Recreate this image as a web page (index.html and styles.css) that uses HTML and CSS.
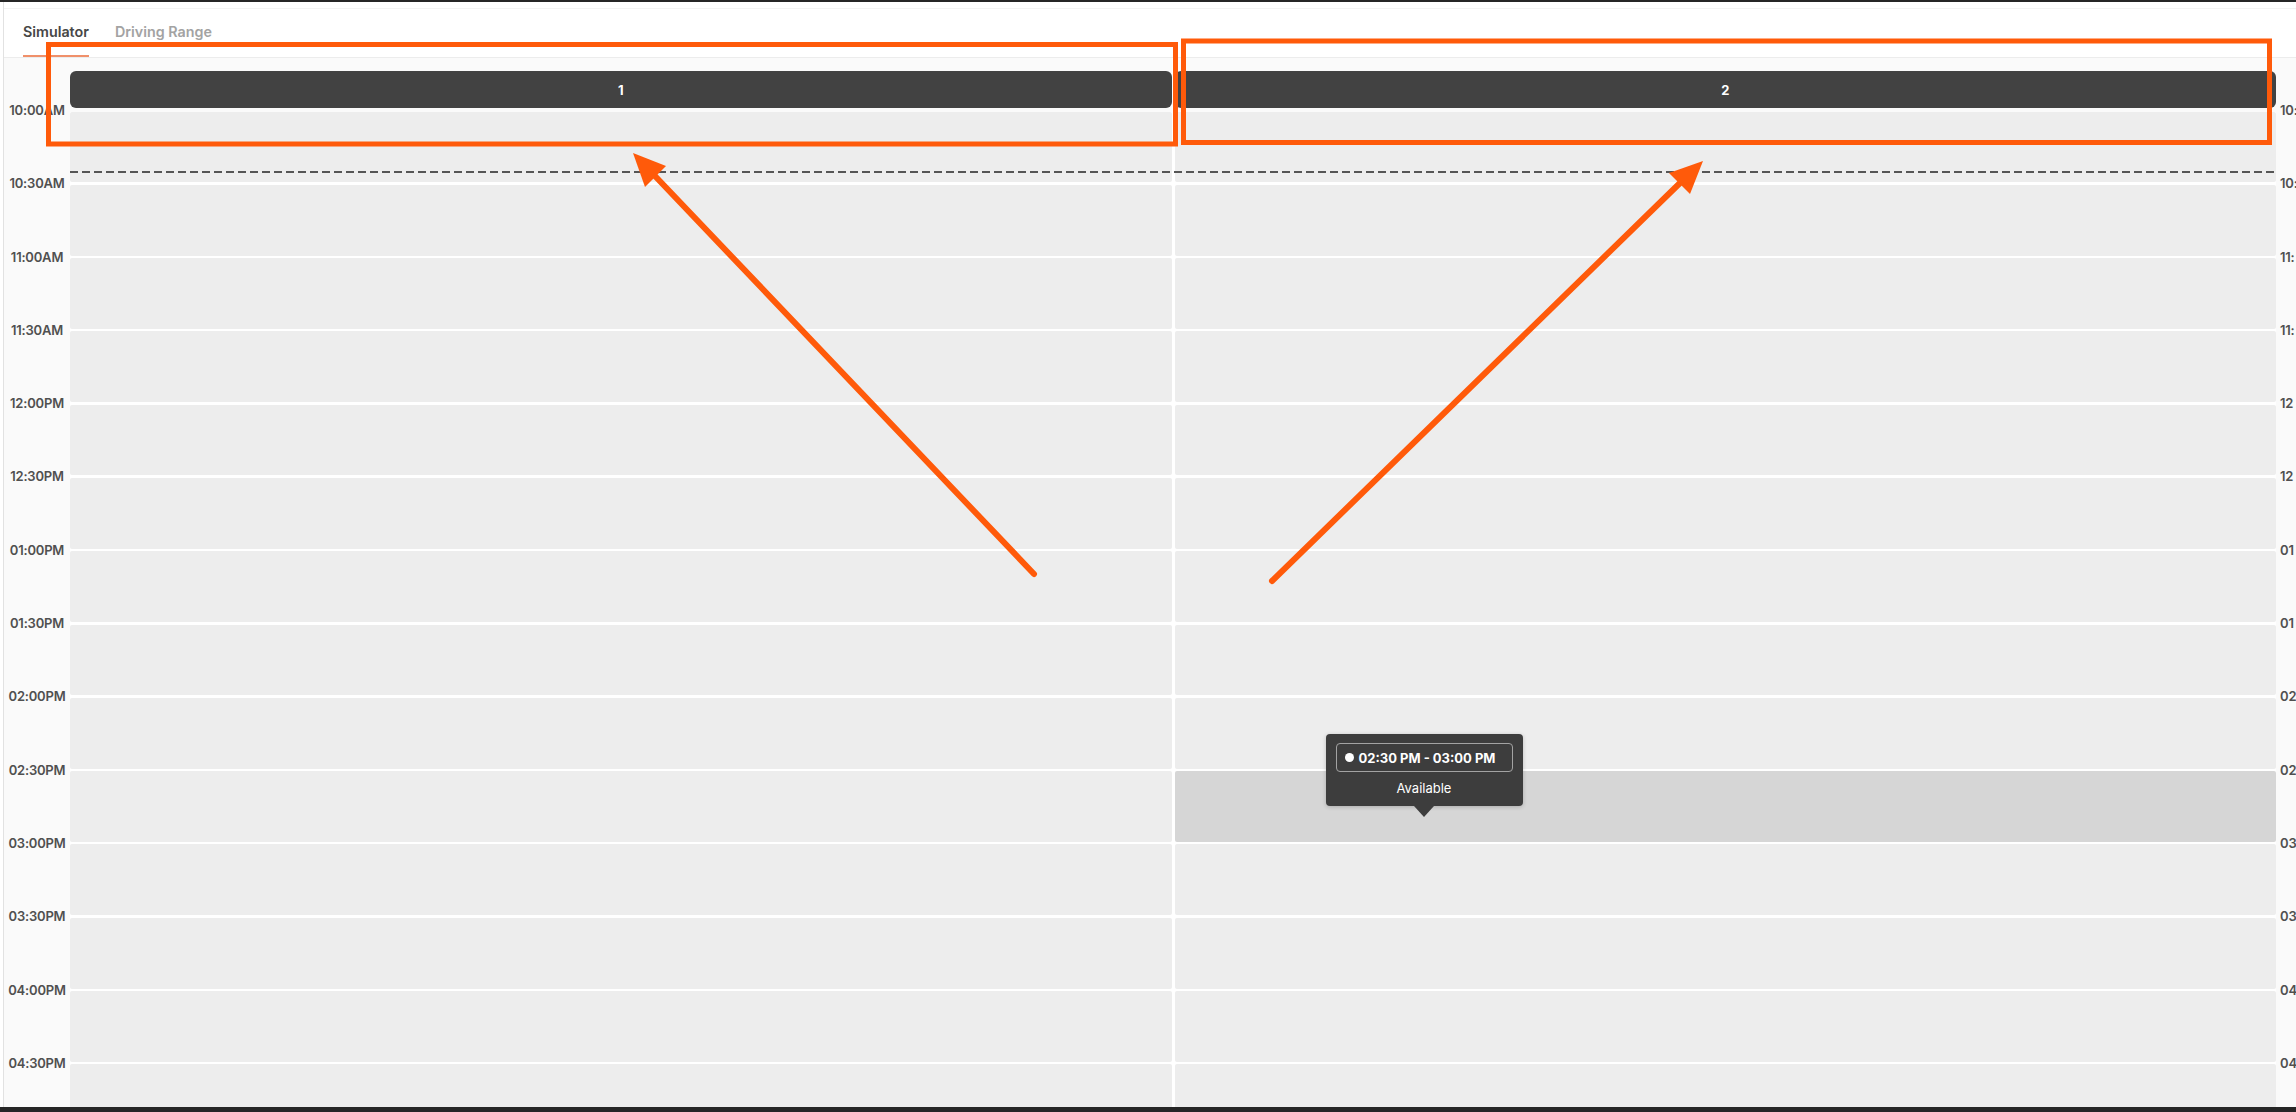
FILE: index.html
```html
<!DOCTYPE html>
<html lang="en">
  <head>
    <meta charset="UTF-8" />
    <title>Bays Schedule</title>
    <link rel="stylesheet" href="styles.css">
  </head>
  <body>
    <div class="app">
      <div class="inner">
        <nav class="tabs">
          <div class="tab active">Simulator</div>
          <div class="tab">Driving Range</div>
        </nav>
        <div class="board">
          <div class="timeCol">
            <div class="time"><span>10:00AM</span></div>
            <div class="time"><span>10:30AM</span></div>
            <div class="time"><span>11:00AM</span></div>
            <div class="time"><span>11:30AM</span></div>
            <div class="time"><span>12:00PM</span></div>
            <div class="time"><span>12:30PM</span></div>
            <div class="time"><span>01:00PM</span></div>
            <div class="time"><span>01:30PM</span></div>
            <div class="time"><span>02:00PM</span></div>
            <div class="time"><span>02:30PM</span></div>
            <div class="time"><span>03:00PM</span></div>
            <div class="time"><span>03:30PM</span></div>
            <div class="time"><span>04:00PM</span></div>
            <div class="time"><span>04:30PM</span></div>
          </div>
          <div class="cols">
            <div class="column">
              <div class="colHead"><div class="bar">1</div></div>
              <div class="slots">
                <div class="slot"></div><div class="slot"></div>
                <div class="slot"></div><div class="slot"></div>
                <div class="slot"></div><div class="slot"></div>
                <div class="slot"></div><div class="slot"></div>
                <div class="slot"></div><div class="slot"></div>
                <div class="slot"></div><div class="slot"></div>
                <div class="slot"></div><div class="slot"></div>
              </div>
            </div>
            <div class="column">
              <div class="colHead"><div class="bar">2</div></div>
              <div class="slots">
                <div class="slot"></div><div class="slot"></div>
                <div class="slot"></div><div class="slot"></div>
                <div class="slot"></div><div class="slot"></div>
                <div class="slot"></div><div class="slot"></div>
                <div class="slot"></div>
                <div class="slot hover">
                  <div class="tooltip">
                    <div class="tipRange"><i class="dot"></i>02:30 PM - 03:00 PM</div>
                    <div class="tipStatus">Available</div>
                  </div>
                </div>
                <div class="slot"></div><div class="slot"></div>
                <div class="slot"></div><div class="slot"></div>
              </div>
            </div>
            <div class="nowLine"></div>
          </div>
          <!-- second time rail, mostly scrolled out of view -->
          <div class="timeCol right">
            <div class="time"><span>10:</span></div>
            <div class="time"><span>10:</span></div>
            <div class="time"><span>11:</span></div>
            <div class="time"><span>11:</span></div>
            <div class="time"><span>12</span></div>
            <div class="time"><span>12</span></div>
            <div class="time"><span>01</span></div>
            <div class="time"><span>01</span></div>
            <div class="time"><span>02</span></div>
            <div class="time"><span>02</span></div>
            <div class="time"><span>03</span></div>
            <div class="time"><span>03</span></div>
            <div class="time"><span>04</span></div>
            <div class="time"><span>04</span></div>
          </div>
        </div>
      </div>
    </div>

    <!-- annotation marks drawn over the screenshot -->
    <svg class="marks" width="2296" height="1112" viewBox="0 0 2296 1112">
      <g fill="none" stroke="#ff5a0a" stroke-width="5">
        <rect x="48.5" y="44.5" width="1127" height="99.5" />
        <rect x="1183.5" y="41" width="1086" height="101.5" />
      </g>
      <g stroke="#ff5a0a" stroke-width="6" stroke-linecap="round">
        <line x1="1034" y1="574" x2="655" y2="176" />
        <line x1="1272" y1="581" x2="1680" y2="183" />
      </g>
      <g fill="#ff5a0a">
        <polygon points="633,153 666,166 645,187" />
        <polygon points="1703,161 1690,194 1669,173" />
      </g>
    </svg>
  </body>
</html>
```

FILE: styles.css
```css
html,
body {
  margin: 0;
  padding: 0;
  width: 2296px;
  height: 1112px;
  overflow: hidden;
  background-color: #262626;
  font-family: Inter, 'Noto Sans', 'Liberation Sans', sans-serif;
  color: #4d4d4d;
  position: relative;
}

.app {
  margin-top: 2px;
  height: 1105px;
  background-color: #fff;
  padding-left: 3px;
  box-sizing: border-box;
  overflow: hidden;
}

.inner {
  height: 100%;
  border-left: 1px solid #e2e2e2;
  display: flex;
  flex-direction: column;
}

.tabs {
  display: flex;
  gap: 26px;
  margin-top: 6px;
  padding-left: 19px;
  border-top: 1px solid #f3f3f3;
  border-bottom: 1px solid #ececec;
}

.tab {
  padding: 13px 0;
  line-height: 20px;
  font-size: 14.3px;
  font-weight: 600;
  color: #a3a3a3;
  border-bottom: 2px solid transparent;
}

.tab.active {
  color: #474747;
  border-bottom-color: #f0906a;
}

.board {
  flex: 1;
  display: flex;
  background-color: #fafafa;
  min-height: 0;
}

.timeCol {
  width: 66px;
  flex-shrink: 0;
  padding-top: 52px;
  box-sizing: border-box;
}

.timeCol.right {
  width: 20px;
  overflow: hidden;
}

.time {
  height: 73.3px;
  text-align: center;
}

.time span {
  display: block;
  line-height: 16px;
  font-size: 13px;
  font-weight: 600;
  letter-spacing: -0.2px;
  color: #505050;
  transform: translateY(-50%);
  white-space: nowrap;
}

.timeCol.right .time {
  text-align: left;
  padding-left: 4px;
}

.cols {
  width: 2206px;
  flex-shrink: 0;
  display: grid;
  grid-template-columns: 1fr 1fr;
  column-gap: 3px;
  background-color: #fff;
  position: relative;
  align-items: start;
}

.column {
  display: flex;
  flex-direction: column;
}

.colHead {
  height: 53.5px;
  padding-top: 13px;
  box-sizing: border-box;
  background-color: #fafafa;
}

.bar {
  height: 37px;
  border-radius: 6px;
  background-color: #424242;
  color: #fff;
  font-size: 13px;
  font-weight: 700;
  display: flex;
  align-items: center;
  justify-content: center;
}

.slots {
  display: grid;
  grid-template-rows: repeat(14, 70.8px);
  row-gap: 2.5px;
}

.slot {
  background-color: #ededed;
  border-radius: 2px;
}

.slot.hover {
  background-color: #d6d6d6;
  position: relative;
}

.tooltip {
  position: absolute;
  left: 151px;
  top: -37px;
  width: 197px;
  box-sizing: border-box;
  padding: 9px 10px 9px;
  background-color: #3d3d3d;
  border-radius: 4px;
  box-shadow: 0 1px 4px rgba(0, 0, 0, 0.2);
  color: #fff;
  z-index: 2;
}

.tooltip::after {
  content: '';
  position: absolute;
  left: 50%;
  bottom: -11px;
  margin-left: -10px;
  border-left: 10px solid transparent;
  border-right: 10px solid transparent;
  border-top: 11px solid #3d3d3d;
}

.tipRange {
  height: 29px;
  border: 1px solid #a3a3a3;
  border-radius: 4px;
  box-sizing: border-box;
  display: flex;
  align-items: center;
  gap: 5px;
  padding: 0 8px;
  font-size: 13px;
  font-weight: 700;
  white-space: nowrap;
}

.dot {
  width: 9px;
  height: 9px;
  border-radius: 50%;
  background-color: #fff;
  flex-shrink: 0;
}

.tipStatus {
  margin-top: 7px;
  line-height: 18px;
  font-size: 13px;
  text-align: center;
}

.nowLine {
  position: absolute;
  left: 0;
  right: 0;
  top: 113px;
  height: 2px;
  background: repeating-linear-gradient(90deg, #555 0 8px, transparent 8px 12px);
}

.marks {
  position: absolute;
  top: 0;
  left: 0;
  pointer-events: none;
}
```
